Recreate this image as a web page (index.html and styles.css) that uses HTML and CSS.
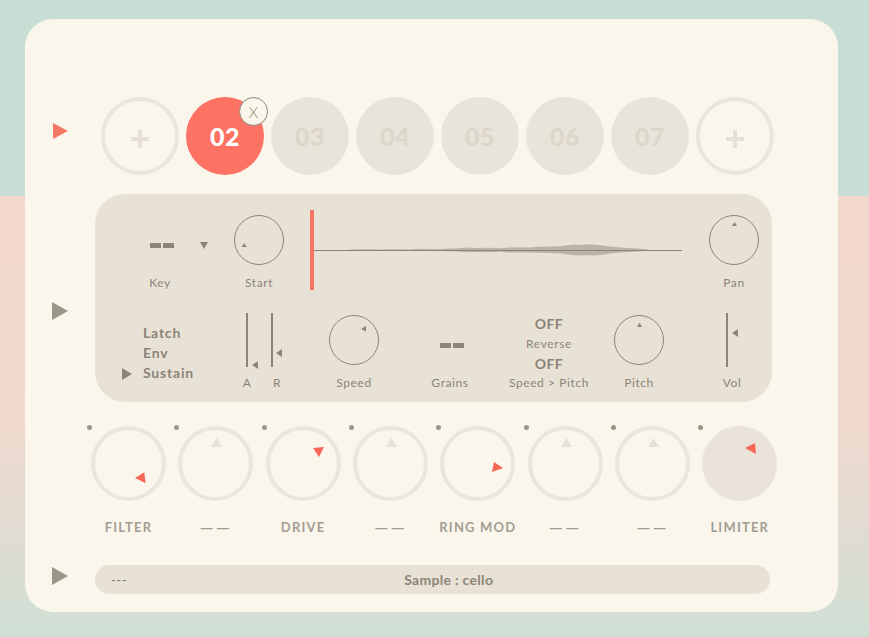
FILE: index.html
```html
<!DOCTYPE html>
<html>
<head>
<meta charset="utf-8">
<title>Sampler</title>
<link rel="stylesheet" href="styles.css">
</head>
<body>
<div class="app">
  <div class="row row-slots">
    <div class="lead lead-slots"><span class="play play-red"></span></div>
    <div class="slots">
      <div class="slot slot-add"><svg class="plus" width="18" height="18" viewBox="0 0 18 18"><rect x="0" y="7" width="18" height="4"/><rect x="7" y="0" width="4" height="18"/></svg></div>
      <div class="slot slot-active">02<span class="close">X</span></div>
      <div class="slot">03</div>
      <div class="slot">04</div>
      <div class="slot">05</div>
      <div class="slot">06</div>
      <div class="slot">07</div>
      <div class="slot slot-add"><svg class="plus" width="18" height="18" viewBox="0 0 18 18"><rect x="0" y="7" width="18" height="4"/><rect x="7" y="0" width="4" height="18"/></svg></div>
    </div>
  </div>

  <div class="row row-panel">
    <div class="lead lead-panel"><span class="play"></span></div>
    <div class="panel">
      <div class="panel-top">
        <div class="cell cell-key">
          <div class="ctrl"><div class="dashes"><span></span><span></span></div></div>
          <div class="lbl">Key</div>
        </div>
        <span class="caret"></span>
        <div class="cell cell-start">
          <div class="ctrl">
            <svg class="knob" width="50" height="50" viewBox="0 0 50 50"><circle cx="25" cy="25" r="24.5"/><polygon points="7.7,32 10.2,28 12.7,32"/></svg>
          </div>
          <div class="lbl">Start</div>
        </div>
        <svg class="wave" width="372" height="80" viewBox="0 0 372 80">
          <polygon class="wave-body" points="40,39.6 55,39.3 70,39.5 85,39.2 100,39.4 110,38.8 125,39.2 140,38.6 150,38.2 155,37.6 165,38 180,37.8 190,38.3 200,37.4 210,37.2 220,37.6 228,36.8 240,36.6 250,36.2 258,35.2 265,34.6 272,35 278,34.2 285,34.8 292,35.4 300,36.4 308,37.2 318,38 328,38.6 338,39.4 338,40.6 328,41.4 318,42 308,42.8 300,43.6 292,44.8 285,45.4 278,45 272,45.6 265,45.2 258,44.4 250,43.4 240,43 228,42.8 220,42.4 210,42.6 200,42.4 190,41.8 180,42.2 165,42 155,42.2 150,41.6 140,41.2 125,40.8 110,41 100,40.6 85,40.8 70,40.5 55,40.6 40,40.4"/>
          <line class="wave-line" x1="4" y1="40.5" x2="372" y2="40.5"/>
          <rect class="wave-head" x="0" y="0" width="4" height="80"/>
        </svg>
        <div class="cell cell-pan">
          <div class="ctrl">
            <svg class="knob" width="50" height="50" viewBox="0 0 50 50"><circle cx="25" cy="25" r="24.5"/><polygon points="23,11 25.5,7 28,11"/></svg>
          </div>
          <div class="lbl">Pan</div>
        </div>
      </div>

      <div class="panel-bottom">
        <div class="modes">
          <div class="mode"><span class="mode-mark"></span>Latch</div>
          <div class="mode"><span class="mode-mark"></span>Env</div>
          <div class="mode"><span class="mode-mark"><span class="mode-arrow"></span></span>Sustain</div>
        </div>
        <div class="cell cell-slider cell-a">
          <div class="ctrl2 track"><span class="track-line"></span><span class="thumb thumb-a"></span></div>
          <div class="lbl">A</div>
        </div>
        <div class="cell cell-slider cell-r">
          <div class="ctrl2 track"><span class="track-line"></span><span class="thumb thumb-r"></span></div>
          <div class="lbl lbl-shift">R</div>
        </div>
        <div class="cell cell-speed">
          <div class="ctrl2 knob-wrap">
            <svg class="knob" width="50" height="50" viewBox="0 0 50 50"><circle cx="25" cy="25" r="24.5"/><polygon points="32,14 37,11 37,16.5"/></svg>
          </div>
          <div class="lbl">Speed</div>
        </div>
        <div class="cell cell-grains">
          <div class="ctrl2 grains-wrap"><div class="dashes"><span></span><span></span></div></div>
          <div class="lbl">Grains</div>
        </div>
        <div class="cell cell-off">
          <div class="off-val">OFF</div>
          <div class="off-name">Reverse</div>
          <div class="off-val">OFF</div>
          <div class="lbl lbl-off">Speed &gt; Pitch</div>
        </div>
        <div class="cell cell-pitch">
          <div class="ctrl2 knob-wrap">
            <svg class="knob" width="50" height="50" viewBox="0 0 50 50"><circle cx="25" cy="25" r="24.5"/><polygon points="23,12 25.5,7.5 28,12"/></svg>
          </div>
          <div class="lbl">Pitch</div>
        </div>
        <div class="cell cell-slider cell-vol">
          <div class="ctrl2 track"><span class="track-line"></span><span class="thumb thumb-vol"></span></div>
          <div class="lbl lbl-shift">Vol</div>
        </div>
      </div>
    </div>
  </div>

  <div class="fx-row">
    <div class="fx">
      <div class="fx-top"><span class="fx-dot"></span>
        <svg class="fx-knob" width="75" height="75" viewBox="0 0 75 75"><circle class="ring" cx="37.5" cy="37.5" r="35.5"/><polygon class="ind-red" points="44,52 53.3,46.3 54.7,57.3"/></svg>
      </div>
      <div class="fx-label">FILTER</div>
    </div>
    <div class="fx">
      <div class="fx-top"><span class="fx-dot"></span>
        <svg class="fx-knob" width="75" height="75" viewBox="0 0 75 75"><circle class="ring" cx="37.5" cy="37.5" r="35.5"/><polygon class="ind-off" points="33,21 38.5,12 44,21"/></svg>
      </div>
      <div class="fx-label fx-empty">——</div>
    </div>
    <div class="fx">
      <div class="fx-top"><span class="fx-dot"></span>
        <svg class="fx-knob" width="75" height="75" viewBox="0 0 75 75"><circle class="ring" cx="37.5" cy="37.5" r="35.5"/><polygon class="ind-red" points="47,22 58,21 53,31"/></svg>
      </div>
      <div class="fx-label">DRIVE</div>
    </div>
    <div class="fx">
      <div class="fx-top"><span class="fx-dot"></span>
        <svg class="fx-knob" width="75" height="75" viewBox="0 0 75 75"><circle class="ring" cx="37.5" cy="37.5" r="35.5"/><polygon class="ind-off" points="33,21 38.5,12 44,21"/></svg>
      </div>
      <div class="fx-label fx-empty">——</div>
    </div>
    <div class="fx">
      <div class="fx-top"><span class="fx-dot"></span>
        <svg class="fx-knob" width="75" height="75" viewBox="0 0 75 75"><circle class="ring" cx="37.5" cy="37.5" r="35.5"/><polygon class="ind-red" points="54,36 52,46 63,42"/></svg>
      </div>
      <div class="fx-label">RING MOD</div>
    </div>
    <div class="fx">
      <div class="fx-top"><span class="fx-dot"></span>
        <svg class="fx-knob" width="75" height="75" viewBox="0 0 75 75"><circle class="ring" cx="37.5" cy="37.5" r="35.5"/><polygon class="ind-off" points="33,21 38.5,12 44,21"/></svg>
      </div>
      <div class="fx-label fx-empty">——</div>
    </div>
    <div class="fx">
      <div class="fx-top"><span class="fx-dot"></span>
        <svg class="fx-knob" width="75" height="75" viewBox="0 0 75 75"><circle class="ring" cx="37.5" cy="37.5" r="35.5"/><polygon class="ind-off" points="33,21 38.5,12 44,21"/></svg>
      </div>
      <div class="fx-label fx-empty">——</div>
    </div>
    <div class="fx">
      <div class="fx-top"><span class="fx-dot"></span>
        <svg class="fx-knob" width="75" height="75" viewBox="0 0 75 75"><circle class="fill" cx="37.5" cy="37.5" r="37.5"/><polygon class="ind-red" points="43,22 53,17 54,28"/></svg>
      </div>
      <div class="fx-label">LIMITER</div>
    </div>
  </div>

  <div class="row row-bar">
    <div class="lead lead-bar"><span class="play"></span></div>
    <div class="bar">
      <span class="bar-dash">---</span>
      <span class="bar-title">Sample : cello</span>
    </div>
  </div>
</div>
</body>
</html>
```

FILE: styles.css
```css
html, body {
  margin: 0;
  height: 100%;
  overflow: hidden;
}

body {
  background: linear-gradient(to bottom,
    #c7ded4 0px, #c8ded4 196px,
    #f3d8cc 196px, #f0d9ce 420px, #dcdcd2 560px, #cfe0d6 637px);
  font-family: "Lato", "DejaVu Sans", sans-serif;
  color: #8b8478;
}

.app {
  margin: 19px 0 0 25px;
  width: 813px;
  height: 593px;
  box-sizing: border-box;
  padding-top: 78px;
  border-radius: 28px;
  background: #faf6ec;
}

.row {
  display: flex;
  align-items: flex-start;
}

.lead {
  width: 70px;
  flex: none;
  box-sizing: border-box;
  padding-left: 27px;
}

.play {
  display: block;
  width: 0;
  height: 0;
  border-left: 16px solid #9c958a;
  border-top: 9px solid transparent;
  border-bottom: 9px solid transparent;
}

.play-red {
  border-left: 15px solid #f57866;
  border-top-width: 8.5px;
  border-bottom-width: 8.5px;
  margin-left: 1px;
}

.lead-slots { margin-top: 26px; }
.lead-panel { margin-top: 108px; }
.lead-bar { margin-top: 2px; }

/* slots */
.slots {
  display: flex;
  gap: 7px;
  margin-left: 6px;
}

.slot {
  position: relative;
  width: 78px;
  height: 78px;
  border-radius: 50%;
  box-sizing: border-box;
  background: #e9e4da;
  color: #dcd6cb;
  font-weight: 900;
  font-size: 25px;
  letter-spacing: 0.5px;
  display: flex;
  align-items: center;
  justify-content: center;
}

.slot-add {
  background: transparent;
  border: 4px solid #ebe6dd;
}

.plus {
  fill: #e6e0d6;
  margin-top: 6px;
}

.slot-active {
  background: #fd7262;
  color: #ffffff;
}

.close {
  position: absolute;
  top: 0;
  left: 53px;
  width: 29px;
  height: 29px;
  box-sizing: border-box;
  border-radius: 50%;
  border: 1px solid #8b8478;
  background: #faf6ec;
  color: #8b8478;
  font-size: 15px;
  font-weight: 300;
  letter-spacing: 0;
  display: flex;
  align-items: center;
  justify-content: center;
}

/* panel */
.row-panel { margin-top: 19px; }

.panel {
  width: 677px;
  height: 208px;
  box-sizing: border-box;
  padding-top: 21px;
  border-radius: 30px;
  background: #e8e2d6;
}

.panel-top {
  display: flex;
  align-items: flex-start;
  height: 75px;
  padding-left: 25px;
}

.cell {
  flex: none;
  display: flex;
  flex-direction: column;
}

.ctrl {
  height: 50px;
  display: flex;
  justify-content: center;
  align-items: flex-start;
}

.lbl {
  display: flex;
  justify-content: center;
  white-space: nowrap;
  font-size: 12px;
  line-height: 14px;
  letter-spacing: 0.6px;
  margin-top: 11px;
}

.dashes {
  display: flex;
  gap: 2px;
}

.dashes span {
  width: 11px;
  height: 5px;
  background: #8b8478;
}

.cell-key { width: 80px; }
.cell-key .dashes { margin: 28px 0 0 4px; }

.caret {
  flex: none;
  width: 0;
  height: 0;
  margin-top: 27px;
  border-top: 7px solid #8b8478;
  border-left: 4px solid transparent;
  border-right: 4px solid transparent;
}

.knob circle {
  fill: none;
  stroke: #8b8478;
  stroke-width: 1;
}

.knob polygon {
  fill: #8b8478;
}

.cell-start { width: 50px; margin-left: 26px; }

.wave {
  flex: none;
  margin-left: 26px;
  margin-top: -5px;
}

.wave-body { fill: #8b8478; opacity: 0.5; }
.wave-line { stroke: #8b8478; stroke-width: 1; }
.wave-head { fill: #fb7462; }

.cell-pan { width: 50px; margin-left: 27px; }

.panel-bottom {
  display: flex;
  align-items: flex-start;
  margin-top: 23px;
  padding-left: 27px;
}

.modes {
  flex: none;
  width: 118px;
  padding-top: 10px;
  font-size: 14px;
  font-weight: 700;
  letter-spacing: 0.8px;
  line-height: 20px;
}

.mode {
  display: flex;
  align-items: center;
}

.mode-mark {
  width: 21px;
  flex: none;
  display: flex;
  align-items: center;
}

.mode-arrow {
  width: 0;
  height: 0;
  border-left: 10px solid #8b8478;
  border-top: 6px solid transparent;
  border-bottom: 6px solid transparent;
  margin-top: 1px;
}

.ctrl2 {
  height: 56px;
}

.cell .ctrl2 + .lbl { margin-top: 7px; }

.track {
  position: relative;
}

.track-line {
  position: absolute;
  left: 6px;
  top: 0;
  width: 2px;
  height: 54px;
  background: #8b8478;
}

.thumb {
  position: absolute;
  width: 0;
  height: 0;
  border-right: 6px solid #8b8478;
  border-top: 4.5px solid transparent;
  border-bottom: 4.5px solid transparent;
}

.thumb-a { left: 12px; top: 48px; }
.thumb-r { left: 11px; top: 36px; }
.thumb-vol { left: 12px; top: 16px; }

.cell-slider { width: 14px; }
.cell-r { margin-left: 11px; }
.lbl-shift { margin-left: 10px; }

.knob-wrap {
  padding-top: 2px;
  box-sizing: border-box;
}

.cell-speed { width: 50px; margin-left: 50px; }

.cell-grains { width: 50px; margin-left: 46px; }
.grains-wrap {
  display: flex;
  justify-content: center;
  padding-top: 30px;
  box-sizing: border-box;
}
.grains-wrap .dashes { margin-left: 3px; }

.cell-off {
  width: 90px;
  margin-left: 29px;
  padding-top: 1px;
  align-items: center;
}

.off-val {
  font-size: 14px;
  font-weight: 700;
  letter-spacing: 0.4px;
  line-height: 20px;
}

.off-name {
  font-size: 12px;
  letter-spacing: 0.6px;
  line-height: 20px;
}

.cell .lbl-off { margin-top: 2px; }

.cell-pitch { width: 50px; margin-left: 20px; }
.cell-vol { margin-left: 56px; }

/* fx knobs */
.fx-row {
  display: flex;
  margin-top: 24px;
  padding-left: 62px;
}

.fx {
  width: 87.33px;
  flex: none;
}

.fx-top {
  display: flex;
  align-items: flex-start;
}

.fx-dot {
  flex: none;
  width: 5px;
  height: 5px;
  border-radius: 50%;
  background: #9c958a;
  margin-top: -1px;
  margin-right: -1px;
}

.fx-knob .ring {
  fill: none;
  stroke: #ebe6dd;
  stroke-width: 4;
}

.fx-knob .fill { fill: #e9e3da; }
.ind-red { fill: #f86656; }
.ind-off { fill: #e6e0d6; }

.fx-label {
  width: 75px;
  margin-left: 4px;
  margin-top: 18px;
  display: flex;
  justify-content: center;
  white-space: nowrap;
  font-size: 13px;
  font-weight: 700;
  letter-spacing: 1.2px;
  line-height: 16px;
  color: #a39d93;
}

.fx-empty {
  font-size: 18px;
  letter-spacing: 2px;
  font-weight: 400;
}

/* bottom bar */
.row-bar { margin-top: 30px; }

.bar {
  width: 675px;
  height: 29px;
  box-sizing: border-box;
  padding-left: 16px;
  border-radius: 15px;
  background: #e8e2d6;
  display: flex;
  align-items: center;
  font-weight: 700;
}

.bar-dash {
  font-size: 12px;
  letter-spacing: 1px;
}

.bar-title {
  flex: 1;
  text-align: center;
  font-size: 14px;
  letter-spacing: 0.3px;
}
```
